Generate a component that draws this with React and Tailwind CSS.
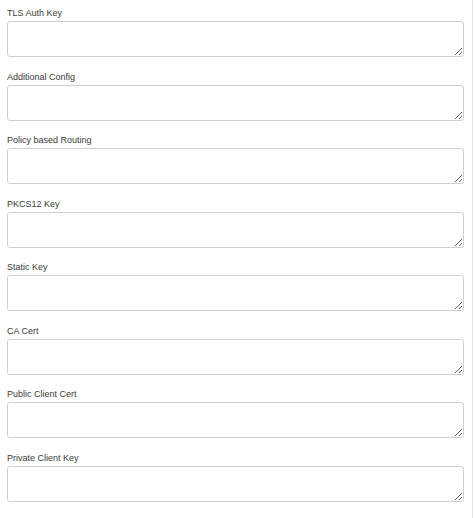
import React from 'react'

const fields = [
  'TLS Auth Key',
  'Additional Config',
  'Policy based Routing',
  'PKCS12 Key',
  'Static Key',
  'CA Cert',
  'Public Client Cert',
  'Private Client Key',
]

export default function App() {
  return (
    <div className="w-[474px] h-[518px] overflow-hidden bg-white font-['Liberation_Sans',Arial,sans-serif]">
      <div className="w-[473px] h-full border-r border-[#e6e6e6] pl-[7px] pr-[8px] pt-[6px]">
        {fields.map((label) => (
          <div key={label} className="mb-[12.5px]">
            <label className="block h-[15px] leading-[14px] text-[9px] text-[#3a3a3a]">{label}</label>
            <textarea className="block w-[457px] h-[36px] border border-[#cfcfcf] rounded-[3px] bg-white outline-none" />
          </div>
        ))}
      </div>
    </div>
  )
}
